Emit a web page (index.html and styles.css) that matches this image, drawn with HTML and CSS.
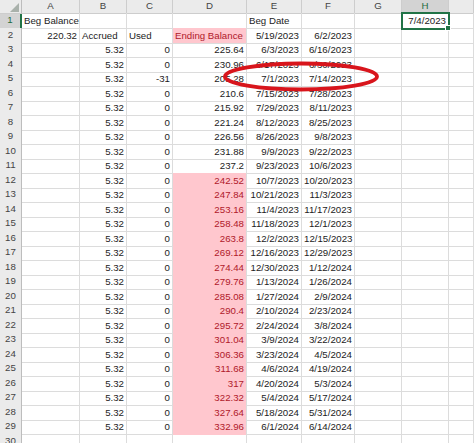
FILE: index.html
```html
<!DOCTYPE html>
<html>
<head>
<meta charset="utf-8">
<link rel="stylesheet" href="styles.css">
</head>
<body>
<div class="sheet">
  <div class="row hdr"><div class="corner"><span class="tri"></span></div><div class="ch">A</div><div class="ch">B</div><div class="ch">C</div><div class="ch">D</div><div class="ch">E</div><div class="ch">F</div><div class="ch">G</div><div class="ch selc">H</div><div class="ch"></div></div>
  <div class="row"><div class="rh selr">1</div><div class="c">Beg Balance</div><div class="c"></div><div class="c"></div><div class="c"></div><div class="c">Beg Date</div><div class="c"></div><div class="c"></div><div class="c n active">7/4/2023<span class="handle"></span></div><div class="c"></div></div>
  <div class="row"><div class="rh">2</div><div class="c n">220.32</div><div class="c">Accrued</div><div class="c">Used</div><div class="c bad top">Ending Balance</div><div class="c n">5/19/2023</div><div class="c n">6/2/2023</div><div class="c"></div><div class="c"></div><div class="c"></div></div>
  <div class="row"><div class="rh">3</div><div class="c"></div><div class="c n">5.32</div><div class="c n">0</div><div class="c n">225.64</div><div class="c n">6/3/2023</div><div class="c n">6/16/2023</div><div class="c"></div><div class="c"></div><div class="c"></div></div>
  <div class="row"><div class="rh">4</div><div class="c"></div><div class="c n">5.32</div><div class="c n">0</div><div class="c n">230.96</div><div class="c n">6/17/2023</div><div class="c n">6/30/2023</div><div class="c"></div><div class="c"></div><div class="c"></div></div>
  <div class="row"><div class="rh">5</div><div class="c"></div><div class="c n">5.32</div><div class="c n">-31</div><div class="c n">205.28</div><div class="c n">7/1/2023</div><div class="c n">7/14/2023</div><div class="c"></div><div class="c"></div><div class="c"></div></div>
  <div class="row"><div class="rh">6</div><div class="c"></div><div class="c n">5.32</div><div class="c n">0</div><div class="c n">210.6</div><div class="c n">7/15/2023</div><div class="c n">7/28/2023</div><div class="c"></div><div class="c"></div><div class="c"></div></div>
  <div class="row"><div class="rh">7</div><div class="c"></div><div class="c n">5.32</div><div class="c n">0</div><div class="c n">215.92</div><div class="c n">7/29/2023</div><div class="c n">8/11/2023</div><div class="c"></div><div class="c"></div><div class="c"></div></div>
  <div class="row"><div class="rh">8</div><div class="c"></div><div class="c n">5.32</div><div class="c n">0</div><div class="c n">221.24</div><div class="c n">8/12/2023</div><div class="c n">8/25/2023</div><div class="c"></div><div class="c"></div><div class="c"></div></div>
  <div class="row"><div class="rh">9</div><div class="c"></div><div class="c n">5.32</div><div class="c n">0</div><div class="c n">226.56</div><div class="c n">8/26/2023</div><div class="c n">9/8/2023</div><div class="c"></div><div class="c"></div><div class="c"></div></div>
  <div class="row"><div class="rh">10</div><div class="c"></div><div class="c n">5.32</div><div class="c n">0</div><div class="c n">231.88</div><div class="c n">9/9/2023</div><div class="c n">9/22/2023</div><div class="c"></div><div class="c"></div><div class="c"></div></div>
  <div class="row"><div class="rh">11</div><div class="c"></div><div class="c n">5.32</div><div class="c n">0</div><div class="c n">237.2</div><div class="c n">9/23/2023</div><div class="c n">10/6/2023</div><div class="c"></div><div class="c"></div><div class="c"></div></div>
  <div class="row"><div class="rh">12</div><div class="c"></div><div class="c n">5.32</div><div class="c n">0</div><div class="c n bad">242.52</div><div class="c n">10/7/2023</div><div class="c n">10/20/2023</div><div class="c"></div><div class="c"></div><div class="c"></div></div>
  <div class="row"><div class="rh">13</div><div class="c"></div><div class="c n">5.32</div><div class="c n">0</div><div class="c n bad">247.84</div><div class="c n">10/21/2023</div><div class="c n">11/3/2023</div><div class="c"></div><div class="c"></div><div class="c"></div></div>
  <div class="row"><div class="rh">14</div><div class="c"></div><div class="c n">5.32</div><div class="c n">0</div><div class="c n bad">253.16</div><div class="c n">11/4/2023</div><div class="c n">11/17/2023</div><div class="c"></div><div class="c"></div><div class="c"></div></div>
  <div class="row"><div class="rh">15</div><div class="c"></div><div class="c n">5.32</div><div class="c n">0</div><div class="c n bad">258.48</div><div class="c n">11/18/2023</div><div class="c n">12/1/2023</div><div class="c"></div><div class="c"></div><div class="c"></div></div>
  <div class="row"><div class="rh">16</div><div class="c"></div><div class="c n">5.32</div><div class="c n">0</div><div class="c n bad">263.8</div><div class="c n">12/2/2023</div><div class="c n">12/15/2023</div><div class="c"></div><div class="c"></div><div class="c"></div></div>
  <div class="row"><div class="rh">17</div><div class="c"></div><div class="c n">5.32</div><div class="c n">0</div><div class="c n bad">269.12</div><div class="c n">12/16/2023</div><div class="c n">12/29/2023</div><div class="c"></div><div class="c"></div><div class="c"></div></div>
  <div class="row"><div class="rh">18</div><div class="c"></div><div class="c n">5.32</div><div class="c n">0</div><div class="c n bad">274.44</div><div class="c n">12/30/2023</div><div class="c n">1/12/2024</div><div class="c"></div><div class="c"></div><div class="c"></div></div>
  <div class="row"><div class="rh">19</div><div class="c"></div><div class="c n">5.32</div><div class="c n">0</div><div class="c n bad">279.76</div><div class="c n">1/13/2024</div><div class="c n">1/26/2024</div><div class="c"></div><div class="c"></div><div class="c"></div></div>
  <div class="row"><div class="rh">20</div><div class="c"></div><div class="c n">5.32</div><div class="c n">0</div><div class="c n bad">285.08</div><div class="c n">1/27/2024</div><div class="c n">2/9/2024</div><div class="c"></div><div class="c"></div><div class="c"></div></div>
  <div class="row"><div class="rh">21</div><div class="c"></div><div class="c n">5.32</div><div class="c n">0</div><div class="c n bad">290.4</div><div class="c n">2/10/2024</div><div class="c n">2/23/2024</div><div class="c"></div><div class="c"></div><div class="c"></div></div>
  <div class="row"><div class="rh">22</div><div class="c"></div><div class="c n">5.32</div><div class="c n">0</div><div class="c n bad">295.72</div><div class="c n">2/24/2024</div><div class="c n">3/8/2024</div><div class="c"></div><div class="c"></div><div class="c"></div></div>
  <div class="row"><div class="rh">23</div><div class="c"></div><div class="c n">5.32</div><div class="c n">0</div><div class="c n bad">301.04</div><div class="c n">3/9/2024</div><div class="c n">3/22/2024</div><div class="c"></div><div class="c"></div><div class="c"></div></div>
  <div class="row"><div class="rh">24</div><div class="c"></div><div class="c n">5.32</div><div class="c n">0</div><div class="c n bad">306.36</div><div class="c n">3/23/2024</div><div class="c n">4/5/2024</div><div class="c"></div><div class="c"></div><div class="c"></div></div>
  <div class="row"><div class="rh">25</div><div class="c"></div><div class="c n">5.32</div><div class="c n">0</div><div class="c n bad">311.68</div><div class="c n">4/6/2024</div><div class="c n">4/19/2024</div><div class="c"></div><div class="c"></div><div class="c"></div></div>
  <div class="row"><div class="rh">26</div><div class="c"></div><div class="c n">5.32</div><div class="c n">0</div><div class="c n bad">317</div><div class="c n">4/20/2024</div><div class="c n">5/3/2024</div><div class="c"></div><div class="c"></div><div class="c"></div></div>
  <div class="row"><div class="rh">27</div><div class="c"></div><div class="c n">5.32</div><div class="c n">0</div><div class="c n bad">322.32</div><div class="c n">5/4/2024</div><div class="c n">5/17/2024</div><div class="c"></div><div class="c"></div><div class="c"></div></div>
  <div class="row"><div class="rh">28</div><div class="c"></div><div class="c n">5.32</div><div class="c n">0</div><div class="c n bad">327.64</div><div class="c n">5/18/2024</div><div class="c n">5/31/2024</div><div class="c"></div><div class="c"></div><div class="c"></div></div>
  <div class="row"><div class="rh">29</div><div class="c"></div><div class="c n">5.32</div><div class="c n">0</div><div class="c n bad">332.96</div><div class="c n">6/1/2024</div><div class="c n">6/14/2024</div><div class="c"></div><div class="c"></div><div class="c"></div></div>
  <div class="row"><div class="rh">30</div><div class="c"></div><div class="c"></div><div class="c"></div><div class="c"></div><div class="c"></div><div class="c"></div><div class="c"></div><div class="c"></div><div class="c"></div></div>
  <svg class="mark" width="164" height="36" viewBox="0 0 164 36"><ellipse cx="81" cy="17.5" rx="76" ry="13" fill="none" stroke="#d8151c" stroke-width="3.8"/></svg>
</div>
</body>
</html>
```
FILE: styles.css
```css
html, body {
  margin: 0;
  padding: 0;
  background: #ffffff;
  overflow: hidden;
}
.sheet {
  position: relative;
  width: 474px;
  height: 443px;
  overflow: hidden;
  font-family: "Liberation Sans", Arial, sans-serif;
  font-size: 9.7px;
  color: #1c1c1c;
}
.row {
  display: grid;
  grid-template-columns: 22px 58px 47px 46px 74px 55px 53px 47px 47px 25px;
  height: 14.5px;
  line-height: 14px;
}
.row.hdr {
  height: 13px;
  line-height: 12px;
}
.corner, .ch, .rh {
  box-sizing: border-box;
  background: #ebebeb;
  color: #444444;
  text-align: center;
  border-right: 1px solid #cdcdcd;
  border-bottom: 1px solid #cdcdcd;
}
.corner {
  position: relative;
  border-right-color: #bdbdbd;
}
.tri {
  position: absolute;
  right: 2px;
  bottom: 1px;
  width: 0;
  height: 0;
  border-left: 9px solid transparent;
  border-bottom: 9px solid #a9b1ab;
}
.ch.selc {
  background: #d3d3d3;
  color: #1f6b3f;
  border-bottom: 2px solid #217346;
}
.rh {
  border-right-color: #bdbdbd;
  border-bottom-color: #d6d6d6;
}
.rh.selr {
  background: #d3d3d3;
  color: #1f6b3f;
  border-right: 2px solid #217346;
}
.c {
  box-sizing: border-box;
  border-right: 1px solid #dcdcdc;
  border-bottom: 1px solid #dcdcdc;
  padding: 1px 2px 0 2px;
  white-space: nowrap;
  overflow: visible;
}
.c.n {
  text-align: right;
}
.c.bad {
  background: #ffc7ce;
  color: #b0192a;
  border-bottom-color: #ffc7ce;
}
.c.bad.top {
  border-bottom-color: #dcdcdc;
}
.c.active {
  position: relative;
  outline: 2px solid #217346;
  outline-offset: -1px;
  z-index: 2;
}
.handle {
  position: absolute;
  right: -3px;
  bottom: -3px;
  width: 4px;
  height: 4px;
  background: #217346;
  border: 1px solid #ffffff;
}
.mark {
  position: absolute;
  left: 220px;
  top: 59px;
}
```
